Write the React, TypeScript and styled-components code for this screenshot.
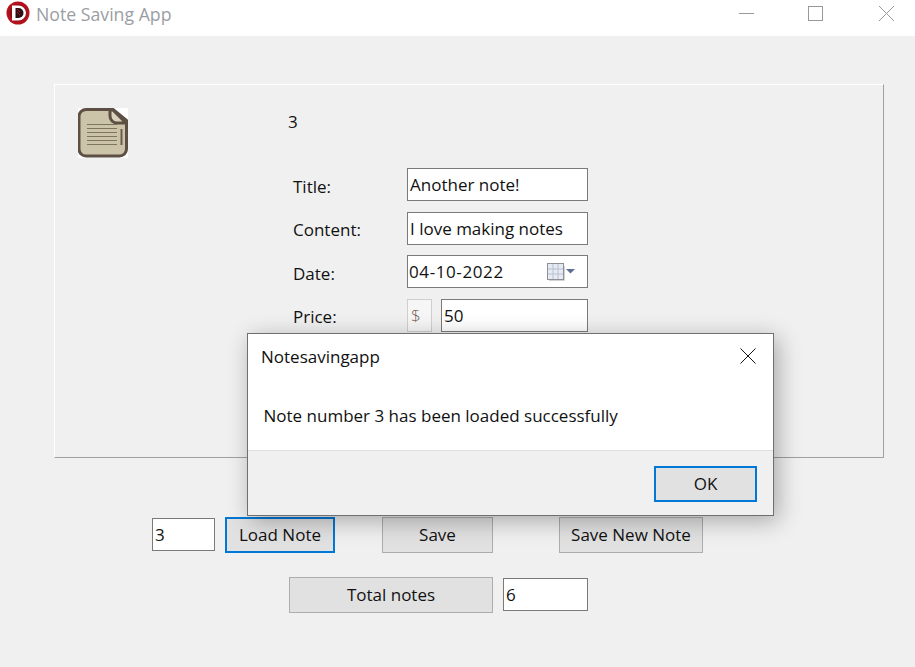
import React from 'react'
import styled, { createGlobalStyle } from 'styled-components'

const GlobalStyle = createGlobalStyle`
  html, body {
    margin: 0;
    padding: 0;
    background: #f0f0f0;
  }
  body {
    font-family: 'Open Sans', 'Noto Sans', sans-serif;
    font-size: 17px;
    color: #111;
  }
`

const Page = styled.div`
  position: relative;
  width: 915px;
  height: 667px;
  overflow: hidden;
  background: #f0f0f0;
`

const TitleBar = styled.header`
  display: flex;
  align-items: center;
  height: 36px;
  padding: 0 21px 8px 6px;
  box-sizing: border-box;
  background: #fff;

  > svg:first-child {
    margin-bottom: 2px;
  }
`

const AppName = styled.span`
  margin: 0 0 1px 6px;
  font-size: 17.7px;
  color: #9a9ea3;
`

const WindowControls = styled.div`
  display: flex;
  align-items: center;
  gap: 54px;
  margin: 0 0 1px auto;
  color: #999;

  svg:last-child {
    margin-left: 2px;
  }
`

const Panel = styled.section`
  display: flex;
  box-sizing: border-box;
  width: 830px;
  height: 374px;
  margin: 48px 0 0 54px;
  padding: 23px;
  border: 1px solid;
  border-color: #fff #a0a0a0 #a0a0a0 #fff;
`

const NoteIcon = styled.svg`
  flex: none;
  width: 50px;
  height: 50px;
`

const Form = styled.div`
  display: flex;
  flex-direction: column;
  margin-left: 160px;
`

const NoteId = styled.div`
  height: 25px;
  margin-bottom: 34px;
  padding-top: 1px;
  line-height: 26px;
`

const Rows = styled.div`
  display: flex;
  flex-direction: column;
  gap: 10.67px;
`

const Row = styled.div`
  display: flex;
  align-items: center;
  height: 33px;
  padding-left: 5px;
`

const Label = styled.span`
  width: 114px;
  padding-top: 3px;
`

const Field = styled.div<{ $width: number; $gap?: number }>`
  display: flex;
  align-items: center;
  box-sizing: border-box;
  width: ${(p) => p.$width}px;
  height: 33px;
  padding: 0 2px;
  border: 1px solid #7a7a7a;
  background: #fff;
  white-space: nowrap;
`

const DateField = styled(Field)`
  padding-left: 1px;
  letter-spacing: 0.6px;
`

const ActionField = styled(Field)`
  margin: 1px 0 0 ${(p) => p.$gap ?? 0}px;
`

const CalendarIcon = styled.svg`
  width: 30px;
  height: 18px;
  margin-left: auto;
  margin-right: 8px;
`

const Addon = styled.div`
  display: flex;
  align-items: center;
  box-sizing: border-box;
  width: 25px;
  height: 33px;
  margin-right: 9px;
  padding-left: 3px;
  border: 1px solid #cfcfcf;
  background: #f6f6f6;
  font-weight: 300;
  color: #6f6259;
`

const ActionRow = styled.div<{ $top: number; $left: number }>`
  display: flex;
  align-items: flex-start;
  height: 36px;
  margin: ${(p) => p.$top}px 0 0 ${(p) => p.$left}px;
`

const Button = styled.div<{ $width: number; $focused?: boolean; $gap?: number }>`
  display: flex;
  align-items: center;
  justify-content: center;
  box-sizing: border-box;
  width: ${(p) => p.$width}px;
  height: 36px;
  margin-left: ${(p) => p.$gap ?? 0}px;
  padding-bottom: 2px;
  border: ${(p) => (p.$focused ? '2px solid #0078d7' : '1px solid #adadad')};
  background: #e1e1e1;
  white-space: nowrap;
`

const Dialog = styled.div`
  position: absolute;
  left: 247px;
  top: 333px;
  display: flex;
  flex-direction: column;
  box-sizing: border-box;
  width: 527px;
  height: 183px;
  border: 1px solid #6f6f6f;
  background: #fff;
  box-shadow: 4px 5px 22px rgba(0, 0, 0, 0.3);
`

const DialogHeader = styled.div`
  display: flex;
  align-items: center;
  justify-content: space-between;
  height: 46px;
  padding: 0 17px 2px 13px;
  box-sizing: border-box;
`

const DialogBody = styled.div`
  flex: 1;
  padding: 23px 16px 0 15.5px;
  line-height: 26px;
`

const DialogFooter = styled.div`
  display: flex;
  justify-content: flex-end;
  height: 65px;
  box-sizing: border-box;
  padding: 15px 16px 0 0;
  border-top: 1px solid #dfdfdf;
  background: #f0f0f0;
`

const Logo = () => (
  <svg width="24" height="24" viewBox="0 0 24 24">
    <circle cx="12" cy="12" r="11.5" fill="#b3121d" />
    <circle cx="12" cy="12" r="8.5" fill="#8d0f18" />
    <path d="M6 4.5h6.5a7.5 7.5 0 0 1 0 15H6z" fill="#fff" />
    <path d="M9.5 7h3a5 5 0 0 1 0 10h-3z" fill="#2b1216" />
    <path d="M11 8l3 3M11 11l3 3" stroke="#b3121d" strokeWidth="1" />
  </svg>
)

const App = () => (
  <Page>
    <GlobalStyle />
    <TitleBar>
      <Logo />
      <AppName>Note Saving App</AppName>
      <WindowControls>
        <svg width="15" height="15" viewBox="0 0 15 15">
          <path d="M0 7.5h15" stroke="currentColor" fill="none" />
        </svg>
        <svg width="15" height="15" viewBox="0 0 15 15">
          <rect x="0.5" y="0.5" width="14" height="14" stroke="currentColor" fill="none" />
        </svg>
        <svg width="15" height="15" viewBox="0 0 15 15">
          <path d="M0 0l15 15M15 0L0 15" stroke="currentColor" fill="none" />
        </svg>
      </WindowControls>
    </TitleBar>

    <Panel>
      <NoteIcon viewBox="0 0 50 50">
        <rect width="50" height="50" fill="#fff" />
        <path
          d="M8 1.5h27l13.5 11V41a7 7 0 0 1-7 7H8a7 7 0 0 1-7-7V8.5a7 7 0 0 1 7-7z"
          fill="#cbc4a8"
          stroke="#5e4f45"
          strokeWidth="3"
          strokeLinejoin="round"
        />
        <path d="M32 2v6a7 7 0 0 0 7 7h9L35 2z" fill="#d8d2bd" stroke="#5e4f45" strokeWidth="3" strokeLinejoin="round" />
        <path
          d="M9 16.5h30M9 20.5h30M9 24.5h30M9 28.5h30M9 32.5h30M9 36.5h30"
          stroke="#80735f"
          strokeWidth="1"
        />
        <path d="M43.5 21v16" stroke="#6a5c50" strokeWidth="2" />
      </NoteIcon>
      <Form>
        <NoteId>3</NoteId>
        <Rows>
          <Row>
            <Label>Title:</Label>
            <Field $width={181}>Another note!</Field>
          </Row>
          <Row>
            <Label>Content:</Label>
            <Field $width={181}>I love making notes</Field>
          </Row>
          <Row>
            <Label>Date:</Label>
            <DateField $width={181}>
              04-10-2022
              <CalendarIcon viewBox="0 0 30 18">
                <path d="M2 17.5h15.5V3" stroke="#d2d2d2" fill="none" />
                <rect x="0.5" y="0.5" width="16" height="16" fill="#e6eaf2" stroke="#8f8f96" />
                <path d="M6 1v15M11 1v15M1 6h15M1 11h15" stroke="#b9c0d2" fill="none" />
                <path d="M19 6h9l-4.5 4.5z" fill="#5b6f93" />
              </CalendarIcon>
            </DateField>
          </Row>
          <Row>
            <Label>Price:</Label>
            <Addon>$</Addon>
            <Field $width={147}>50</Field>
          </Row>
        </Rows>
      </Form>
    </Panel>

    <ActionRow $top={59} $left={152}>
      <ActionField $width={63}>3</ActionField>
      <Button $width={110} $gap={10} $focused>Load Note</Button>
      <Button $width={111} $gap={47}>Save</Button>
      <Button $width={144} $gap={66}>Save New Note</Button>
    </ActionRow>
    <ActionRow $top={24} $left={289}>
      <Button $width={204}>Total notes</Button>
      <ActionField $width={85} $gap={10}>6</ActionField>
    </ActionRow>

    <Dialog>
      <DialogHeader>
        Notesavingapp
        <svg width="16" height="16" viewBox="0 0 16 16">
          <path d="M0.5 0.5l15 15M15.5 0.5l-15 15" stroke="#111" fill="none" />
        </svg>
      </DialogHeader>
      <DialogBody>Note number 3 has been loaded successfully</DialogBody>
      <DialogFooter>
        <Button $width={103} $focused>OK</Button>
      </DialogFooter>
    </Dialog>
  </Page>
)

export default App
